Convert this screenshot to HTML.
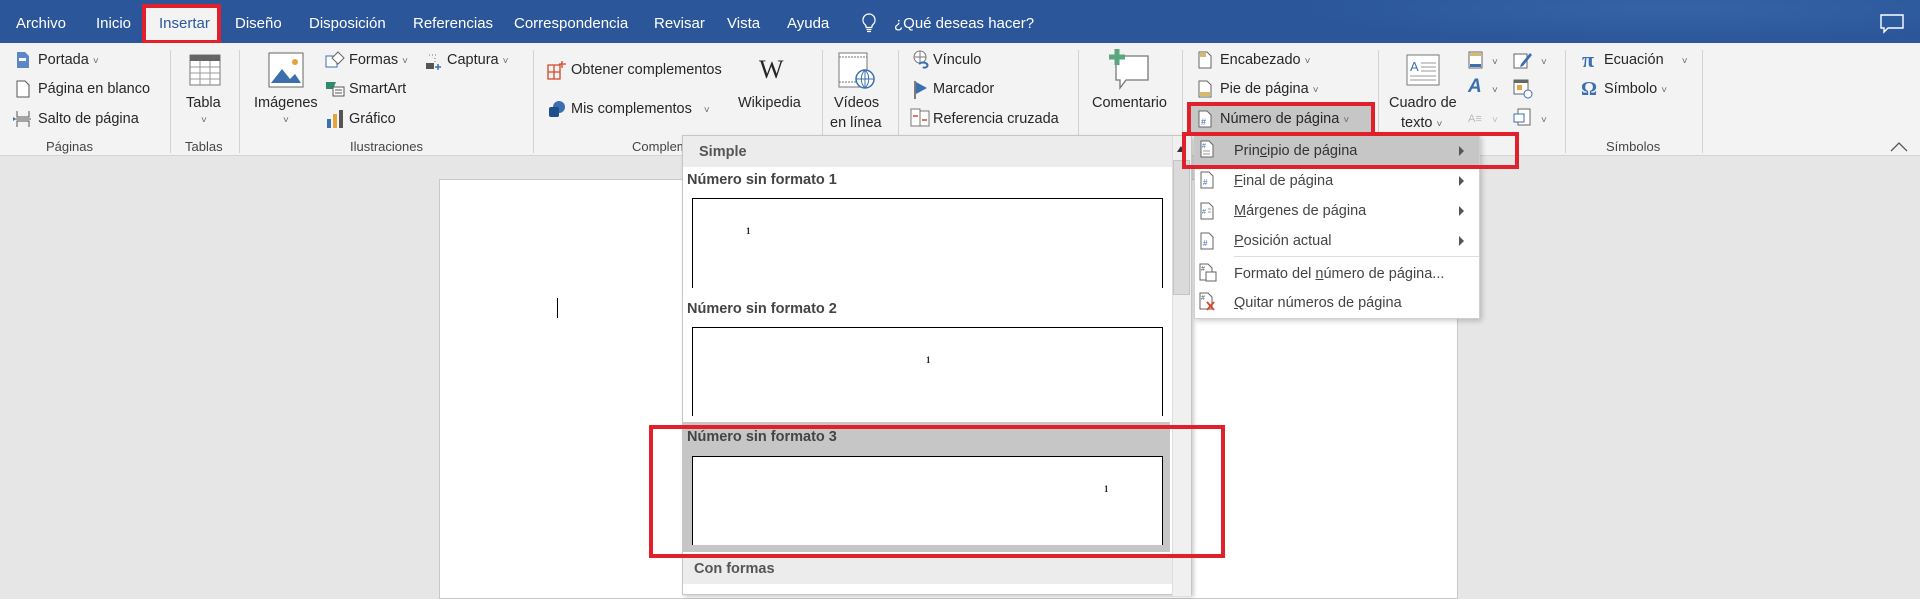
<!DOCTYPE html>
<html><head><meta charset="utf-8"><style>
*{margin:0;padding:0;box-sizing:border-box}
body{width:1920px;height:590px;overflow:hidden;background:#e6e6e6;font-family:"Liberation Sans",sans-serif;font-size:14.5px;color:#262626;position:relative}
.a{position:absolute;white-space:nowrap;line-height:18px}
.tab{position:absolute;top:14px;color:#fff;font-size:15px;line-height:20px}
.lbl{position:absolute;top:139px;font-size:13px;color:#444;line-height:16px}
.sep{position:absolute;top:50px;width:1px;height:103px;background:#d2d2d2}
.ch{font-size:10px;color:#666}
.ic{position:absolute}
.sub{position:absolute;left:1234px;font-size:14.5px;color:#444;line-height:18px}
.arr{position:absolute;left:1459px;width:0;height:0;border-left:5px solid #555;border-top:5px solid transparent;border-bottom:5px solid transparent}
.gh{position:absolute;left:687px;font-weight:bold;color:#444;font-size:14.5px;line-height:18px}
.box{position:absolute;left:692px;width:471px;border:1.5px solid #000;border-bottom:none;background:#fff}
.one{position:absolute;font-family:"Liberation Serif",serif;font-size:9px;font-weight:bold}
</style></head><body>
<div style="position:absolute;left:0;top:0;width:1920px;height:43px;background:#2b579a"></div>
<div style="position:absolute;left:1300px;top:0;width:620px;height:43px;background:radial-gradient(ellipse at 60% 20%,#3563a6 0%,#2b579a 70%)"></div>
<div style="position:absolute;left:146px;top:6px;width:72px;height:37px;background:#f3f3f3"></div>
<div class="tab" style="left:16px">Archivo</div>
<div class="tab" style="left:96px">Inicio</div>
<div class="tab" style="left:159px;color:#2b579a">Insertar</div>
<div class="tab" style="left:235px">Diseño</div>
<div class="tab" style="left:309px">Disposición</div>
<div class="tab" style="left:413px">Referencias</div>
<div class="tab" style="left:514px">Correspondencia</div>
<div class="tab" style="left:654px">Revisar</div>
<div class="tab" style="left:727px">Vista</div>
<div class="tab" style="left:787px">Ayuda</div>
<svg class="ic" style="left:862px;top:13px" width="14" height="20" viewBox="0 0 14 20"><path d="M7 1a6 6 0 0 0-4 10.5c1 1 1.3 2 1.3 3h5.4c0-1 .3-2 1.3-3A6 6 0 0 0 7 1zM4.5 16.5h5M5 18.5h4" fill="none" stroke="#fff" stroke-width="1.3"/></svg>
<div class="tab" style="left:894px">¿Qué deseas hacer?</div>
<svg class="ic" style="left:1880px;top:14px" width="24" height="20" viewBox="0 0 24 20"><path d="M1 1h22v13H8l-4 4v-4H1z" fill="none" stroke="#fff" stroke-width="1.4"/></svg>
<div style="position:absolute;left:142px;top:4px;width:79px;height:40px;border:4px solid #e0202a"></div>

<div style="position:absolute;left:0;top:43px;width:1920px;height:113px;background:#f3f3f3;border-bottom:1px solid #d4d4d4"></div>
<div class="sep" style="left:170px"></div><div class="sep" style="left:239px"></div><div class="sep" style="left:533px"></div><div class="sep" style="left:822px"></div><div class="sep" style="left:898px"></div><div class="sep" style="left:1078px"></div><div class="sep" style="left:1182px"></div><div class="sep" style="left:1378px"></div><div class="sep" style="left:1565px"></div><div class="sep" style="left:1702px"></div>

<svg class="ic" style="left:16px;top:51px" width="14" height="18"><path d="M1 1h8l4 4v12H1z" fill="#5b87c4"/><rect x="3" y="7" width="7" height="3" fill="#fff"/></svg>
<div class="a" style="left:38px;top:51px">Portada <span class="ch">˅</span></div>
<svg class="ic" style="left:16px;top:80px" width="14" height="18"><path d="M1 1h8l4 4v12H1z" fill="#fff" stroke="#555"/></svg>
<div class="a" style="left:38px;top:80px">Página en blanco</div>
<svg class="ic" style="left:13px;top:110px" width="18" height="18"><path d="M4 1v6h12V1M4 17v-6h12v6M1 9h17" fill="none" stroke="#555"/><path d="M0 7l3 2-3 2z" fill="#3a6fb0"/></svg>
<div class="a" style="left:38px;top:110px">Salto de página</div>
<div class="lbl" style="left:46px">Páginas</div>
<svg class="ic" style="left:189px;top:54px" width="32" height="32"><rect x="1" y="1" width="30" height="30" fill="#fff" stroke="#777"/><rect x="1" y="1" width="30" height="6" fill="#666"/><path d="M1 13h30M1 19h30M1 25h30M11 7v24M21 7v24" stroke="#999"/></svg>
<div class="a" style="left:186px;top:94px">Tabla</div>
<div class="a ch" style="left:201px;top:112px">˅</div>
<div class="lbl" style="left:185px">Tablas</div>
<svg class="ic" style="left:268px;top:52px" width="36" height="36"><rect x="1" y="1" width="34" height="34" fill="#fff" stroke="#666"/><circle cx="27" cy="10" r="3" fill="#e5a33c"/><path d="M3 31l11-14 8 10 5-5 6 9z" fill="#3b6fae"/></svg>
<div class="a" style="left:254px;top:94px">Imágenes</div>
<div class="a ch" style="left:283px;top:112px">˅</div>
<svg class="ic" style="left:325px;top:51px" width="20" height="18"><rect x="1" y="5" width="11" height="11" fill="#fff" stroke="#3a6fb0"/><path d="M13 1l6 6-6 6-6-6z" fill="#fff" stroke="#666"/></svg>
<div class="a" style="left:349px;top:51px">Formas <span class="ch">˅</span></div>
<svg class="ic" style="left:325px;top:81px" width="20" height="16"><path d="M1 1h10l-3 7H1z" fill="#2e8b6e"/><rect x="8" y="6" width="11" height="9" fill="#fff" stroke="#555"/><path d="M10 9h7M10 12h7" stroke="#555"/></svg>
<div class="a" style="left:349px;top:80px">SmartArt</div>
<svg class="ic" style="left:326px;top:110px" width="18" height="18"><rect x="1" y="9" width="4" height="9" fill="#3a6fb0"/><rect x="7" y="4" width="4" height="14" fill="#e5a33c"/><rect x="13" y="0" width="4" height="18" fill="#555"/></svg>
<div class="a" style="left:349px;top:110px">Gráfico</div>
<svg class="ic" style="left:425px;top:54px" width="18" height="16"><rect x="1" y="9" width="8" height="6" fill="#555"/><path d="M4 1h1M7 1h1M10 1h1M10 4v1M10 7v1" stroke="#777"/><path d="M13 10v6M10 13h6" stroke="#3a6fb0" stroke-width="1.5"/></svg>
<div class="a" style="left:447px;top:51px">Captura <span class="ch">˅</span></div>
<div class="lbl" style="left:350px">Ilustraciones</div>
<svg class="ic" style="left:547px;top:60px" width="20" height="20"><path d="M1 5h12v14H1zM1 12h12M7 5v14M15 1v7M12 4h7" fill="none" stroke="#d24726" stroke-width="1.3"/></svg>
<div class="a" style="left:571px;top:61px">Obtener complementos</div>
<svg class="ic" style="left:548px;top:100px" width="18" height="18"><circle cx="11" cy="7" r="6" fill="#3a6fb0"/><rect x="1" y="7" width="10" height="10" rx="2" fill="#1f4e8c"/></svg>
<div class="a" style="left:571px;top:100px">Mis complementos <span class="ch" style="margin-left:8px">˅</span></div>
<div class="a" style="left:759px;top:56px;font-family:'Liberation Serif',serif;font-size:26px;line-height:28px">W</div>
<div class="a" style="left:738px;top:94px">Wikipedia</div>
<div class="lbl" style="left:632px">Complementos</div>
<svg class="ic" style="left:838px;top:52px" width="38" height="38"><rect x="1" y="1" width="28" height="34" fill="#fff" stroke="#777"/><path d="M1 5h28M1 30h28" stroke="#777" stroke-dasharray="2 1"/><circle cx="27" cy="27" r="9" fill="#fff" stroke="#3a6fb0" stroke-width="1.5"/><path d="M18 27h18M27 18v18M27 18c-5 5-5 13 0 18M27 18c5 5 5 13 0 18" fill="none" stroke="#3a6fb0"/></svg>
<div class="a" style="left:834px;top:94px">Vídeos</div>
<div class="a" style="left:830px;top:114px">en línea</div>
<svg class="ic" style="left:912px;top:50px" width="18" height="20"><circle cx="8" cy="7" r="6" fill="#fff" stroke="#777"/><path d="M2 7h12M8 1v12" stroke="#777"/><path d="M7 14c2-2 6-2 8 0s-2 5-4 3" fill="none" stroke="#3a6fb0" stroke-width="2"/></svg>
<div class="a" style="left:933px;top:51px">Vínculo</div>
<svg class="ic" style="left:913px;top:80px" width="16" height="20"><path d="M2 1v18" stroke="#555" stroke-width="1.5"/><path d="M3 2l11 6-11 6z" fill="#3a6fb0"/></svg>
<div class="a" style="left:933px;top:80px">Marcador</div>
<svg class="ic" style="left:910px;top:108px" width="20" height="20"><rect x="1" y="1" width="9" height="17" fill="#fff" stroke="#777"/><rect x="10" y="3" width="9" height="15" fill="#fff" stroke="#777"/><path d="M3 8h5M12 12h5" stroke="#d24726" stroke-width="1.5"/></svg>
<div class="a" style="left:933px;top:110px">Referencia cruzada</div>
<svg class="ic" style="left:1108px;top:48px" width="42" height="42"><path d="M8 8h32v24H18l-6 8v-8H8z" fill="#fff" stroke="#777" stroke-width="1.3"/><path d="M9 1v16M1 9h16" stroke="#5aa67e" stroke-width="5"/></svg>
<div class="a" style="left:1092px;top:94px">Comentario</div>
<svg class="ic" style="left:1198px;top:51px" width="14" height="18"><path d="M1 1h8l4 4v12H1z" fill="#fff" stroke="#666"/><rect x="2" y="2" width="6" height="4" fill="#d8b86a"/></svg>
<div class="a" style="left:1220px;top:51px">Encabezado <span class="ch">˅</span></div>
<svg class="ic" style="left:1198px;top:80px" width="14" height="18"><path d="M1 1h8l4 4v12H1z" fill="#fff" stroke="#666"/><rect x="2" y="12" width="10" height="4" fill="#d8b86a"/></svg>
<div class="a" style="left:1220px;top:80px">Pie de página <span class="ch">˅</span></div>
<div style="position:absolute;left:1190px;top:105px;width:181px;height:28px;background:#c6c6c6"></div>
<svg class="ic" style="left:1198px;top:110px" width="14" height="18"><path d="M1 1h8l4 4v12H1z" fill="#fff" stroke="#666"/><text x="3" y="15" font-size="9" fill="#3a6fb0" font-family="Liberation Sans">#</text></svg>
<div class="a" style="left:1220px;top:110px">Número de página <span class="ch">˅</span></div>
<div style="position:absolute;left:1187px;top:102px;width:188px;height:34px;border:4px solid #e0202a"></div>
<svg class="ic" style="left:1406px;top:54px" width="34" height="32"><rect x="1" y="1" width="32" height="30" fill="#fff" stroke="#777"/><text x="4" y="17" font-size="13" fill="#3a6fb0" font-family="Liberation Sans">A</text><path d="M15 9h15M15 13h15M15 17h15M4 22h26M4 26h26" stroke="#999"/></svg>
<div class="a" style="left:1389px;top:94px">Cuadro de</div>
<div class="a" style="left:1401px;top:114px">texto <span class="ch">˅</span></div>
<svg class="ic" style="left:1468px;top:51px" width="16" height="18"><rect x="1" y="1" width="13" height="16" fill="#fff" stroke="#666"/><rect x="2" y="2" width="11" height="3" fill="#d8b86a"/><rect x="2" y="13" width="11" height="3" fill="#3a6fb0"/></svg>
<div class="a ch" style="left:1492px;top:54px">˅</div>
<div class="a" style="left:1468px;top:76px;color:#3a6fb0;font-style:italic;font-weight:bold;font-size:19px;line-height:22px">A</div>
<div class="a ch" style="left:1492px;top:82px">˅</div>
<div class="a" style="left:1468px;top:110px;color:#bbb;font-size:11px">A≡</div>
<div class="a ch" style="left:1492px;top:112px;color:#bbb">˅</div>
<svg class="ic" style="left:1513px;top:51px" width="20" height="18"><rect x="1" y="3" width="13" height="14" fill="#fff" stroke="#666"/><path d="M8 13l9-11 2 2-9 11-3 1z" fill="#3a6fb0"/></svg>
<div class="a ch" style="left:1541px;top:54px">˅</div>
<svg class="ic" style="left:1513px;top:79px" width="20" height="20"><rect x="1" y="1" width="14" height="14" fill="#fff" stroke="#666"/><rect x="1" y="1" width="14" height="3" fill="#666"/><rect x="4" y="6" width="5" height="5" fill="#e5a33c"/><circle cx="15" cy="15" r="4" fill="#fff" stroke="#3a6fb0"/></svg>
<svg class="ic" style="left:1513px;top:108px" width="20" height="20"><rect x="5" y="1" width="12" height="16" fill="#fff" stroke="#666"/><rect x="1" y="6" width="10" height="8" fill="#fff" stroke="#3a6fb0"/></svg>
<div class="a ch" style="left:1541px;top:112px">˅</div>
<div class="a" style="left:1582px;top:48px;color:#3a6fb0;font-family:'Liberation Serif',serif;font-size:22px;font-weight:bold;line-height:24px">π</div>
<div class="a" style="left:1604px;top:51px">Ecuación <span class="ch" style="margin-left:14px">˅</span></div>
<div class="a" style="left:1581px;top:77px;color:#3a6fb0;font-family:'Liberation Serif',serif;font-size:20px;font-weight:bold;line-height:24px">Ω</div>
<div class="a" style="left:1604px;top:80px">Símbolo <span class="ch">˅</span></div>
<div class="lbl" style="left:1606px">Símbolos</div>
<svg class="ic" style="left:1890px;top:141px" width="18" height="11"><path d="M1 10l8-8 8 8" fill="none" stroke="#555" stroke-width="1.3"/></svg>

<div style="position:absolute;left:439px;top:179px;width:1019px;height:420px;background:#fff;border:1px solid #c8c8c8"></div>
<div style="position:absolute;left:557px;top:298px;width:1px;height:20px;background:#000"></div>

<div style="position:absolute;left:682px;top:135px;width:510px;height:460px;background:#fff;border:1px solid #c6c6c6;box-shadow:2px 2px 4px rgba(0,0,0,.2)"></div>
<div style="position:absolute;left:683px;top:136px;width:489px;height:31px;background:#ececec"></div>
<div class="a" style="left:699px;top:143px;font-weight:bold;color:#555">Simple</div>
<div style="position:absolute;left:1172px;top:136px;width:19px;height:460px;background:#f0f0f0;border-left:1px solid #ddd"></div>
<div style="position:absolute;left:1177px;top:146px;border-bottom:6px solid #333;border-left:4px solid transparent;border-right:4px solid transparent"></div>
<div style="position:absolute;left:1173px;top:160px;width:17px;height:135px;background:#dadada;border:1px solid #c4c4c4"></div>
<div class="gh" style="top:171px">Número sin formato 1</div>
<div class="box" style="top:198px;height:90px"><div class="one" style="left:53px;top:27px">1</div></div>
<div class="gh" style="top:300px">Número sin formato 2</div>
<div class="box" style="top:327px;height:89px"><div class="one" style="left:233px;top:27px">1</div></div>
<div style="position:absolute;left:683px;top:422px;width:487px;height:130px;background:#c6c6c6"></div>
<div class="gh" style="top:428px">Número sin formato 3</div>
<div class="box" style="top:456px;height:89px"><div class="one" style="left:411px;top:27px">1</div></div>
<div style="position:absolute;left:683px;top:555px;width:489px;height:29px;background:#ececec"></div>
<div class="a" style="left:694px;top:560px;font-weight:bold;color:#555">Con formas</div>
<div style="position:absolute;left:649px;top:425px;width:576px;height:133px;border:4px solid #e0202a"></div>

<div style="position:absolute;left:1194px;top:135px;width:286px;height:184px;background:#fff;border:1px solid #d0d0d0;box-shadow:2px 2px 5px rgba(0,0,0,.2)"></div>
<div style="position:absolute;left:1194px;top:136px;width:285px;height:30px;background:#c6c6c6"></div>
<svg class="ic" style="left:1200px;top:140px" width="14" height="18"><path d="M1 1h8l4 4v12H1z" fill="#fff" stroke="#666"/><text x="2" y="8" font-size="7" fill="#3a6fb0">#</text><path d="M3 11h7M3 14h7" stroke="#999"/></svg>
<div class="sub" style="top:142px;color:#333">Prin<u>c</u>ipio de página</div><div class="arr" style="top:146px"></div>
<svg class="ic" style="left:1200px;top:171px" width="14" height="18"><path d="M1 1h8l4 4v12H1z" fill="#fff" stroke="#666"/><text x="3" y="14" font-size="8" fill="#3a6fb0">#</text></svg>
<div class="sub" style="top:172px"><u>F</u>inal de página</div><div class="arr" style="top:176px"></div>
<svg class="ic" style="left:1200px;top:202px" width="14" height="18"><path d="M1 1h8l4 4v12H1z" fill="#fff" stroke="#666"/><text x="2" y="12" font-size="7" fill="#3a6fb0">#</text><path d="M8 7h3M8 10h3" stroke="#999"/></svg>
<div class="sub" style="top:202px"><u>M</u>árgenes de página</div><div class="arr" style="top:206px"></div>
<svg class="ic" style="left:1200px;top:232px" width="14" height="18"><path d="M1 1h8l4 4v12H1z" fill="#fff" stroke="#666"/><text x="3" y="14" font-size="8" fill="#3a6fb0">#</text></svg>
<div class="sub" style="top:232px"><u>P</u>osición actual</div><div class="arr" style="top:236px"></div>
<div style="position:absolute;left:1234px;top:256px;width:245px;height:1px;background:#ddd"></div>
<svg class="ic" style="left:1199px;top:263px" width="18" height="20"><path d="M1 1h8l4 4v12H1z" fill="#fff" stroke="#666"/><rect x="7" y="9" width="10" height="9" fill="#fff" stroke="#666"/><text x="2" y="8" font-size="7" fill="#555">#</text></svg>
<div class="sub" style="top:265px">Formato del <u>n</u>úmero de página...</div>
<svg class="ic" style="left:1199px;top:292px" width="18" height="20"><path d="M1 1h8l4 4v12H1z" fill="#fff" stroke="#666"/><text x="2" y="8" font-size="7" fill="#555">#</text><path d="M8 10l7 8M15 10l-7 8" stroke="#d24726" stroke-width="1.8"/></svg>
<div class="sub" style="top:294px"><u>Q</u>uitar números de página</div>
<div style="position:absolute;left:1182px;top:132px;width:337px;height:37px;border:4px solid #e0202a"></div>
</body></html>
